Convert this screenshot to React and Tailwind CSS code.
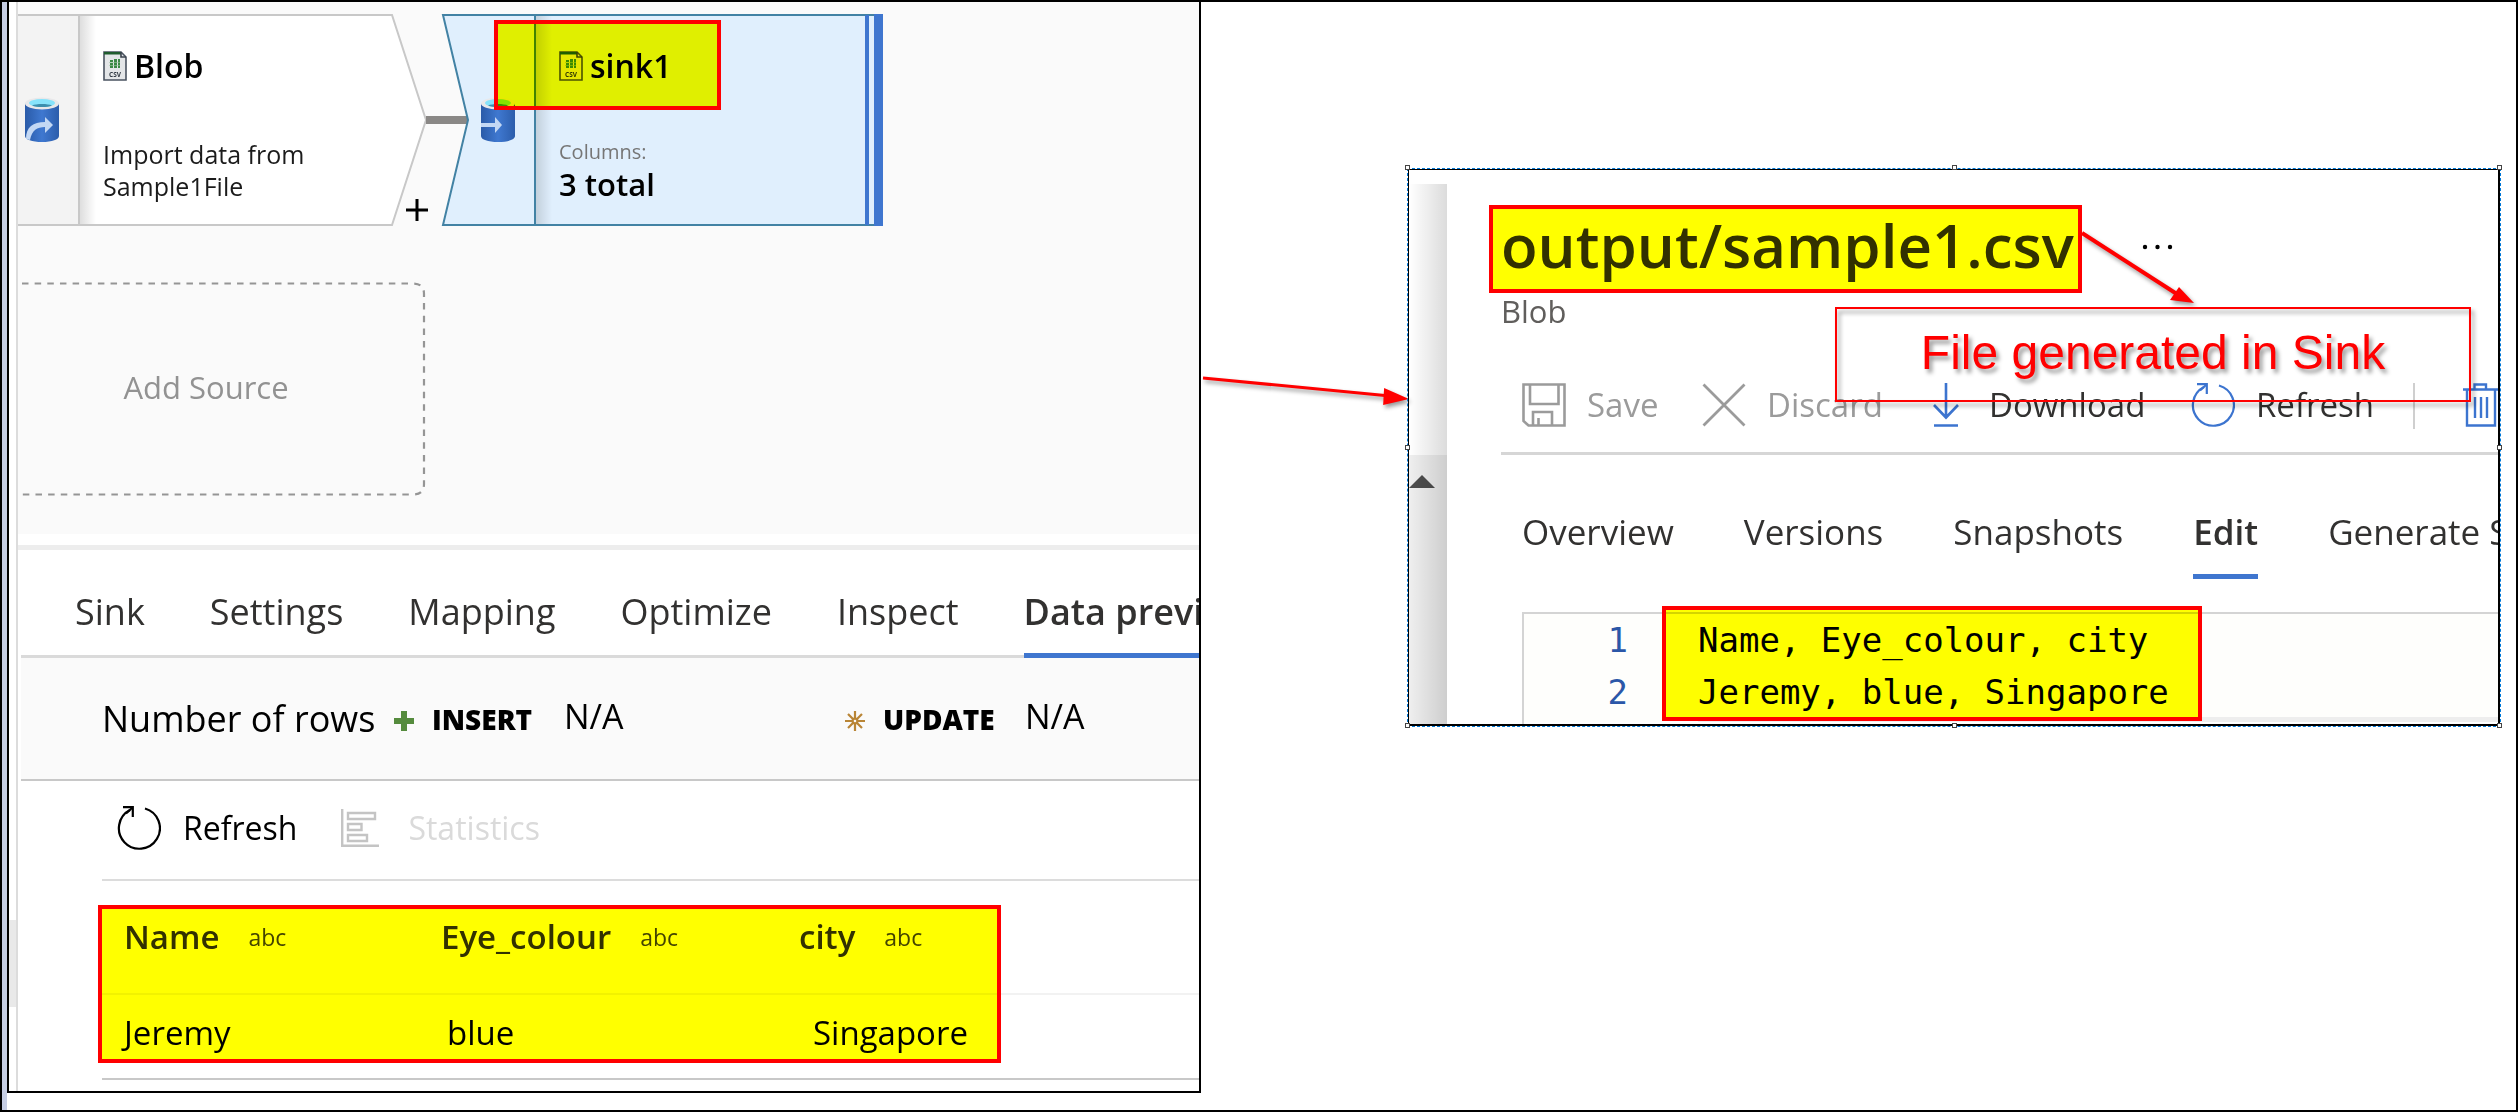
const sinkTabs = ['Sink', 'Settings', 'Mapping', 'Optimize', 'Inspect', 'Data preview'];

const blobTabs = ['Overview', 'Versions', 'Snapshots', 'Edit', 'Generate SAS'];

const columns = [
  { name: 'Name', value: 'Jeremy', cell: 'pl-[22px]' },
  { name: 'Eye_colour', value: 'blue', cell: 'pl-7' },
  { name: 'city', value: 'Singapore', cell: 'pl-9' },
];

const codeLines = ['Name, Eye_colour, city', 'Jeremy, blue, Singapore'];

// Yellow marker with a red outline, laid over the content it marks
const Highlight = ({ className }) => (
  <div className={`pointer-events-none absolute ${className}`}>
    <div className="absolute inset-0 bg-[#ffff00] mix-blend-multiply" />
    <div className="absolute inset-0 border-4 border-[#ff0000]" />
  </div>
);

const CsvIcon = () => (
  <svg className="h-[30px] w-6 shrink-0" viewBox="0 0 24 30" fill="none">
    <path d="M1 1H18L23 6V29H1Z" fill="#e4e6e8" stroke="#4a5360" strokeWidth="1.6" />
    <path d="M1 1H18V3.5H1Z" fill="#1f5c2e" />
    <path d="M18 1V6H23" stroke="#3b434e" strokeWidth="1.6" />
    <path d="M7 9h3v2H7zM7 12h3v5H7zM11 8h3v9h-3zM15 8h2v9h-2z" fill="#3c8a46" />
    <path d="M6 11.500H17M6 14.500H17" stroke="#9cc4a1" strokeWidth=".6" />
    <text x="12" y="25.500" textAnchor="middle" fontSize="6.500" fontWeight="700" fill="#2e3640">
      CSV
    </text>
  </svg>
);

const StorageIcon = ({ id, children }) => (
  <svg className="h-[46px] w-9" viewBox="0 0 36 46" fill="none">
    <defs>
      <linearGradient id={id} x1="0" x2="1" y1="0" y2="0">
        <stop offset="0" stopColor="#2a5ba8" />
        <stop offset=".5" stopColor="#3f78d0" />
        <stop offset="1" stopColor="#2c5dab" />
      </linearGradient>
    </defs>
    <path d="M1 6V39C1 42.500 8 45 18 45S35 42.500 35 39V6Z" fill={`url(#${id})`} />
    <ellipse cx="18" cy="6.500" rx="17" ry="6" fill="#e8e8ea" />
    <ellipse cx="18" cy="6" rx="13" ry="4" fill="#86e3fb" />
    <path d="M8 8.500C12 6.500 24 6.500 28 8.500C24 10.500 12 10.500 8 8.500Z" fill="#3c8fae" />
    {children}
  </svg>
);

const RefreshIcon = ({ className }) => (
  <svg className={className} viewBox="0 0 44 44" fill="none" stroke="currentColor" strokeWidth="2.200">
    <path d="M28 2.500A20.500 20.500 0 1 1 13 4" />
    <path d="M6 1.200H15.800V11" />
    <path d="M15 2L9 7.500" />
  </svg>
);

const StatisticsIcon = () => (
  <svg className="h-[38px] w-[38px]" viewBox="0 0 38 38" fill="none" stroke="#c4c4c4" strokeWidth="2.400">
    <path d="M1.200 0V36.800H38" />
    <path d="M7 4H34V10H7ZM7 15H20.500V21H7ZM7 26H26V32H7Z" />
  </svg>
);

const SaveIcon = () => (
  <svg className="h-11 w-11" viewBox="0 0 44 44" fill="none" stroke="currentColor" strokeWidth="2.600">
    <path d="M1.500 1.500H42.500V42.500H6.500L1.500 38Z" />
    <path d="M8 1.500V21H36.500V1.500" />
    <path d="M11 42.500V29H30V42.500M16.500 42V35" />
  </svg>
);

const DiscardIcon = () => (
  <svg className="h-11 w-11" viewBox="0 0 44 44" fill="none" stroke="currentColor" strokeWidth="2.800">
    <path d="M1.500 1.500L42.500 42.500M42.500 1.500L1.500 42.500" />
  </svg>
);

const DownloadIcon = () => (
  <svg className="h-11 w-[26px] text-[#3c74cf]" viewBox="0 0 26 44" fill="none" stroke="currentColor" strokeWidth="2.600">
    <path d="M13 0V34M1 22L13 34.500L25 22M1 42.500H25" />
  </svg>
);

const TrashIcon = () => (
  <svg className="h-11 w-9 text-[#3c74cf]" viewBox="0 0 36 44" fill="none" stroke="currentColor" strokeWidth="2.400">
    <path d="M0 6.500H36M11.500 6V1.500H23V6M4 6.500V42.500H32V6.500" />
    <path d="M12 14V35M18 14V35M24 14V35" />
  </svg>
);

const DataFlowGraph = () => (
  <section className="relative h-[532px] bg-[#fafafa]">
    {/* Node outlines and the connector between them */}
    <svg className="absolute top-0 left-0 h-[240px] w-[880px]" viewBox="18 2 880 240" fill="none">
      <defs>
        <linearGradient id="fold" x1="0" x2="1" y1="0" y2="0">
          <stop offset="0" stopColor="#000" stopOpacity=".13" />
          <stop offset="1" stopColor="#000" stopOpacity="0" />
        </linearGradient>
      </defs>
      <path d="M18 15H79V225H18Z" fill="#f3f3f3" />
      <path d="M79 15H392L426 120L392 225H79Z" fill="#fff" />
      <rect x="80" y="16" width="16" height="208" fill="url(#fold)" />
      <path d="M18 15H392L426 120L392 225H18M79 15V225" stroke="#c8c8c8" strokeWidth="2" />
      <path d="M426 120H468" stroke="#8a8886" strokeWidth="8" />
      <path d="M443 15H882V225H443L468 120Z" fill="#e0effd" />
      <rect x="536" y="16" width="16" height="208" fill="url(#fold)" />
      <path d="M882 15H443L468 120L443 225H882M535 15V225" stroke="#4282a4" strokeWidth="2" />
      <path d="M867 15V225" stroke="#3f76cf" strokeWidth="4" />
      <path d="M878.500 14V226" stroke="#3f76cf" strokeWidth="9" />
    </svg>

    <div className="absolute top-[95px] left-[6px]">
      <StorageIcon id="sourceDrum">
        <path d="M2 42C2 30 9 25 21 25V20L29 28L21 36V30C13 30 8 33 6 43Z" fill="#c3d8f4" />
      </StorageIcon>
    </div>
    <div className="absolute top-[48px] left-[85px]">
      <h2 className="flex items-center gap-[7px] text-[32px] leading-[32px] font-semibold text-black">
        <CsvIcon />
        Blob
      </h2>
      <p className="mt-[56px] text-[25px] leading-8 text-[#1b1b1b]">
        Import data from
        <br />
        Sample1File
      </p>
    </div>
    <button className="absolute top-[196px] left-[387px] h-6 w-6 text-black" aria-label="Add transformation">
      <svg viewBox="0 0 24 24" fill="none" stroke="currentColor" strokeWidth="3">
        <path d="M12 1V23M1 12H23" />
      </svg>
    </button>

    <div className="absolute top-[95px] left-[462px]">
      <StorageIcon id="sinkDrum">
        <path d="M1 26H15V20L22 28L15 36V30H1Z" fill="#c3d8f4" />
      </StorageIcon>
    </div>
    <div className="absolute top-[48px] left-[541px] text-black">
      <h2 className="flex items-center gap-[7px] text-[32px] leading-[32px] font-semibold">
        <CsvIcon />
        sink1
      </h2>
      <p className="mt-[54px] text-[20px] leading-8 text-[#767676]">Columns:</p>
      <p className="text-[31px] leading-[32px] font-semibold">3 total</p>
    </div>
    <Highlight className="top-[18px] left-[476px] h-[90px] w-[227px]" />

    <button className="absolute top-[280px] left-0 h-[214px] w-[408px] pr-[32px] pb-1 text-[31px] text-[#929292]">
      <svg className="absolute inset-0 h-full w-full" viewBox="0 0 408 214" fill="none">
        <path
          d="M4 1.500H395Q406 1.500 406 12V202Q406 212.500 395 212.500H4"
          stroke="#959595"
          strokeWidth="2.200"
          strokeDasharray="6.500 6.150"
        />
      </svg>
      Add Source
    </button>
  </section>
);

const SinkTabs = () => (
  <nav className="ml-[3px] flex h-[108px] gap-[65px] pl-[54px] shadow-[inset_0_-3px_#dadada]">
    {sinkTabs.map((tab) => (
      <button
        key={tab}
        className={
          tab === 'Data preview'
            ? 'shrink-0 border-b-[5px] border-[#3f76cf] pt-5 text-4xl font-semibold whitespace-nowrap text-[#323130]'
            : 'shrink-0 border-b-[5px] border-transparent pt-5 text-4xl text-[#323130]'
        }
      >
        {tab}
      </button>
    ))}
  </nav>
);

const RowCounts = () => (
  <div className="ml-[3px] flex h-[123px] items-center border-b-2 border-[#c8c8c8] bg-[#fafafa] pl-[81px] text-black">
    <span className="w-[292px] text-4xl">Number of rows</span>
    <svg className="mt-1 h-5 w-5" viewBox="0 0 20 20">
      <path d="M7 0H13V7H20V13H13V20H7V13H0V7H7Z" fill="#558b3d" />
    </svg>
    <span className="ml-[18px] w-[132px] text-[28px] font-extrabold">INSERT</span>
    <span className="mb-1 w-[281px] text-[34px]">N/A</span>
    <svg className="mt-1 h-5 w-5" viewBox="0 0 20 20" fill="none" stroke="#b98536" strokeWidth="2.200">
      <path d="M10 0V7M10 13V20M0 10H7M13 10H20M3 3L8 8M12 12L17 17M17 3L12 8M8 12L3 17" />
      <circle cx="10" cy="10" r="2.400" />
    </svg>
    <span className="ml-[18px] w-[142px] text-[28px] font-extrabold">UPDATE</span>
    <span className="mb-1 text-[34px]">N/A</span>
  </div>
);

const DataPreview = () => (
  <div className="relative ml-[84px]">
    <div className="flex h-[100px] items-center border-b-2 border-[#dcdcdc] pb-1 pl-[15px] text-[32px]">
      <button className="flex items-center gap-[22px] text-black">
        <RefreshIcon className="h-11 w-11" />
        Refresh
      </button>
      <button className="ml-[44px] flex items-center gap-[29px] text-[#dadada]" disabled>
        <StatisticsIcon />
        Statistics
      </button>
    </div>
    <table className="w-full table-fixed border-separate border-spacing-0 text-left">
      <colgroup>
        <col className="w-[317px]" />
        <col className="w-[358px]" />
        <col />
      </colgroup>
      <thead>
        <tr>
          {columns.map((column) => (
            <th
              key={column.name}
              className="h-[114px] border-b-2 border-[#f2f2f2] pl-[22px] text-[33px] font-semibold text-[#323130]"
            >
              <span className="flex items-center gap-[29px]">
                {column.name}
                <span className="text-[23px] font-medium text-[#444]">abc</span>
              </span>
            </th>
          ))}
        </tr>
      </thead>
      <tbody>
        <tr>
          {columns.map((column) => (
            <td
              key={column.name}
              className={`${column.cell} h-[85px] border-b-2 border-[#c8c8c8] pb-2 text-[33px] text-black`}
            >
              {column.value}
            </td>
          ))}
        </tr>
      </tbody>
    </table>
    <Highlight className="top-[124px] left-[-4px] h-[158px] w-[903px]" />
  </div>
);

const DataFlowPane = () => (
  <div className="flex border-x-2 border-b-2 border-black">
    <div className="w-[9px] shrink-0 border-r-2 border-[#dcdcdc] pt-[918px]">
      <div className="h-[87px] bg-[#e9e9e9]" />
    </div>
    <div className="min-w-0 flex-1 overflow-hidden pb-[11px]">
      <DataFlowGraph />
      <div className="mt-[11px] h-[5px] bg-[#ededed]" />
      <SinkTabs />
      <RowCounts />
      <DataPreview />
    </div>
  </div>
);

const LinkArrow = () => (
  <div className="relative pt-[362px]">
    <svg
      className="relative h-[60px] w-full overflow-visible drop-shadow-[2px_3px_2px_rgba(0,0,0,0.4)]"
      viewBox="0 0 208 60"
      preserveAspectRatio="none"
    >
      <path d="M2 14L190 32" stroke="#f00" strokeWidth="3" />
      <path d="M184 24L209 35L183 41Z" fill="#f00" />
    </svg>
  </div>
);

const handles = [
  '-top-[5px] -left-[4px]',
  '-top-[5px] left-1/2 -ml-0.5',
  '-top-[5px] -right-[4px]',
  'top-1/2 -left-[4px] -mt-0.5',
  'top-1/2 -right-[4px] -mt-0.5',
  '-bottom-[4px] -left-[4px]',
  '-bottom-[4px] left-1/2 -ml-0.5',
  '-bottom-[4px] -right-[4px]',
];

const BlobHeader = () => (
  <header className="relative ml-[54px] border-b-[3px] border-[#d6d6d6] pt-[35px]">
    <div className="flex items-center gap-[60px]">
      <div className="relative -ml-3">
        <h1 className="h-[88px] w-[593px] pl-3 text-[60px] leading-[80px] font-semibold whitespace-nowrap text-[#323130]">
          output/sample1.csv
        </h1>
        <Highlight className="inset-0" />
        <svg
          className="absolute top-[26px] left-full h-[76px] w-[116px] overflow-visible drop-shadow-[2px_3px_2px_rgba(0,0,0,0.4)]"
          viewBox="0 0 116 76"
        >
          <path d="M0 2L98 65" stroke="#f00" strokeWidth="4" />
          <path d="M97 56L112 72L88 69Z" fill="#f00" />
        </svg>
      </div>
      <button className="h-8 w-8 text-black" aria-label="More">
        <svg viewBox="0 0 32 32" fill="currentColor">
          <circle cx="3" cy="14" r="2.200" />
          <circle cx="15.500" cy="14" r="2.200" />
          <circle cx="28" cy="14" r="2.200" />
        </svg>
      </button>
    </div>
    <p className="text-[31px] leading-9 text-[#605e5c]">Blob</p>
    <div className="mt-12 flex h-[75px] items-start overflow-hidden pt-[6px] pl-[21px] text-[33px] leading-[44px] whitespace-nowrap text-[#323130]">
      <button className="flex w-[180px] shrink-0 gap-[21px] text-[#9b9b9b]" disabled>
        <SaveIcon />
        Save
      </button>
      <button className="flex w-[231px] shrink-0 gap-[21px] text-[#9b9b9b]" disabled>
        <DiscardIcon />
        Discard
      </button>
      <button className="flex w-[258px] shrink-0 gap-[30px]">
        <DownloadIcon />
        Download
      </button>
      <button className="flex w-[222px] shrink-0 gap-[21px]">
        <RefreshIcon className="h-11 w-11 text-[#3c74cf]" />
        Refresh
      </button>
      <div className="h-[46px] w-0.5 shrink-0 bg-[#cfcfcf]" />
      <button className="ml-[48px] shrink-0" aria-label="Delete">
        <TrashIcon />
      </button>
    </div>
    <div className="absolute top-[137px] left-[334px] h-[95px] w-[636px] border-2 border-[#ff0000] text-center font-['Liberation_Sans',sans-serif] text-[48px] leading-[87px] whitespace-nowrap text-[#ff0000] drop-shadow-[3px_4px_2px_rgba(0,0,0,0.4)]">
      File generated in Sink
    </div>
  </header>
);

const BlobTabs = () => (
  <nav className="ml-[75px] flex h-[124px] gap-[70px] overflow-hidden">
    {blobTabs.map((tab) => (
      <button
        key={tab}
        className={
          tab === 'Edit'
            ? 'shrink-0 border-b-[5px] border-[#3f76cf] pt-9 text-[35px] font-semibold text-[#323130]'
            : 'shrink-0 border-b-[5px] border-transparent pt-9 text-[35px] whitespace-nowrap text-[#323130]'
        }
      >
        {tab}
      </button>
    ))}
  </nav>
);

const CodeEditor = () => (
  <div className="relative mt-[33px] ml-[75px] border-t-2 border-l-2 border-[#d4d4d4] bg-[#fefefc]">
    <ol className="h-[103px] font-['DejaVu_Sans_Mono',monospace] text-[34px] leading-[52px]">
      {codeLines.map((line, i) => (
        <li key={line} className="flex whitespace-pre">
          <span className="w-[104px] text-right text-[#2b57a8]">{i + 1}</span>
          <code className="pl-[70px] font-['DejaVu_Sans_Mono',monospace] text-black">{line}</code>
        </li>
      ))}
    </ol>
    <div className="ml-[174px] h-[5px] bg-[#eee]" />
    <div className="h-0.5 bg-white" />
    <Highlight className="-top-[8px] left-[138px] h-[115px] w-[540px]" />
  </div>
);

const BlobPane = () => (
  <div className="relative mt-[167px] self-start border-t border-r-2 border-b-2 border-l border-black">
    <div className="flex overflow-hidden">
      <div className="relative w-[38px] shrink-0 pt-[285px]">
        <div className="h-full bg-[#efefef] pt-5">
          <svg className="h-[13px] w-[26px]" viewBox="0 0 26 13">
            <path d="M13 0L26 13H0Z" fill="#4d4d4d" />
          </svg>
        </div>
        <div className="absolute inset-x-0 top-[14px] bottom-0 bg-linear-to-r from-transparent to-black/14" />
      </div>
      <div className="min-w-0 flex-1 overflow-hidden">
        <BlobHeader />
        <BlobTabs />
        <CodeEditor />
      </div>
    </div>

    {/* Selection marquee */}
    <div className="pointer-events-none absolute -top-[2px] -right-[3px] -bottom-[3px] -left-[2px] border border-dashed border-[#0078d7]" />
    {handles.map((place) => (
      <div key={place} className={`absolute h-[5px] w-[5px] border border-[#444] bg-white ${place}`} />
    ))}
  </div>
);

const App = () => (
  <main className="flex min-h-screen flex-col border-2 border-black bg-white font-['Open_Sans','Noto_Sans',sans-serif]">
    <div className="flex-1 border-l-[5px] border-[#c5cde3] pr-4 pb-4">
      <div className="grid grid-cols-[minmax(0,1194fr)_minmax(0,207fr)_minmax(0,1092fr)]">
        <DataFlowPane />
        <LinkArrow />
        <BlobPane />
      </div>
    </div>
  </main>
);

export default App;
